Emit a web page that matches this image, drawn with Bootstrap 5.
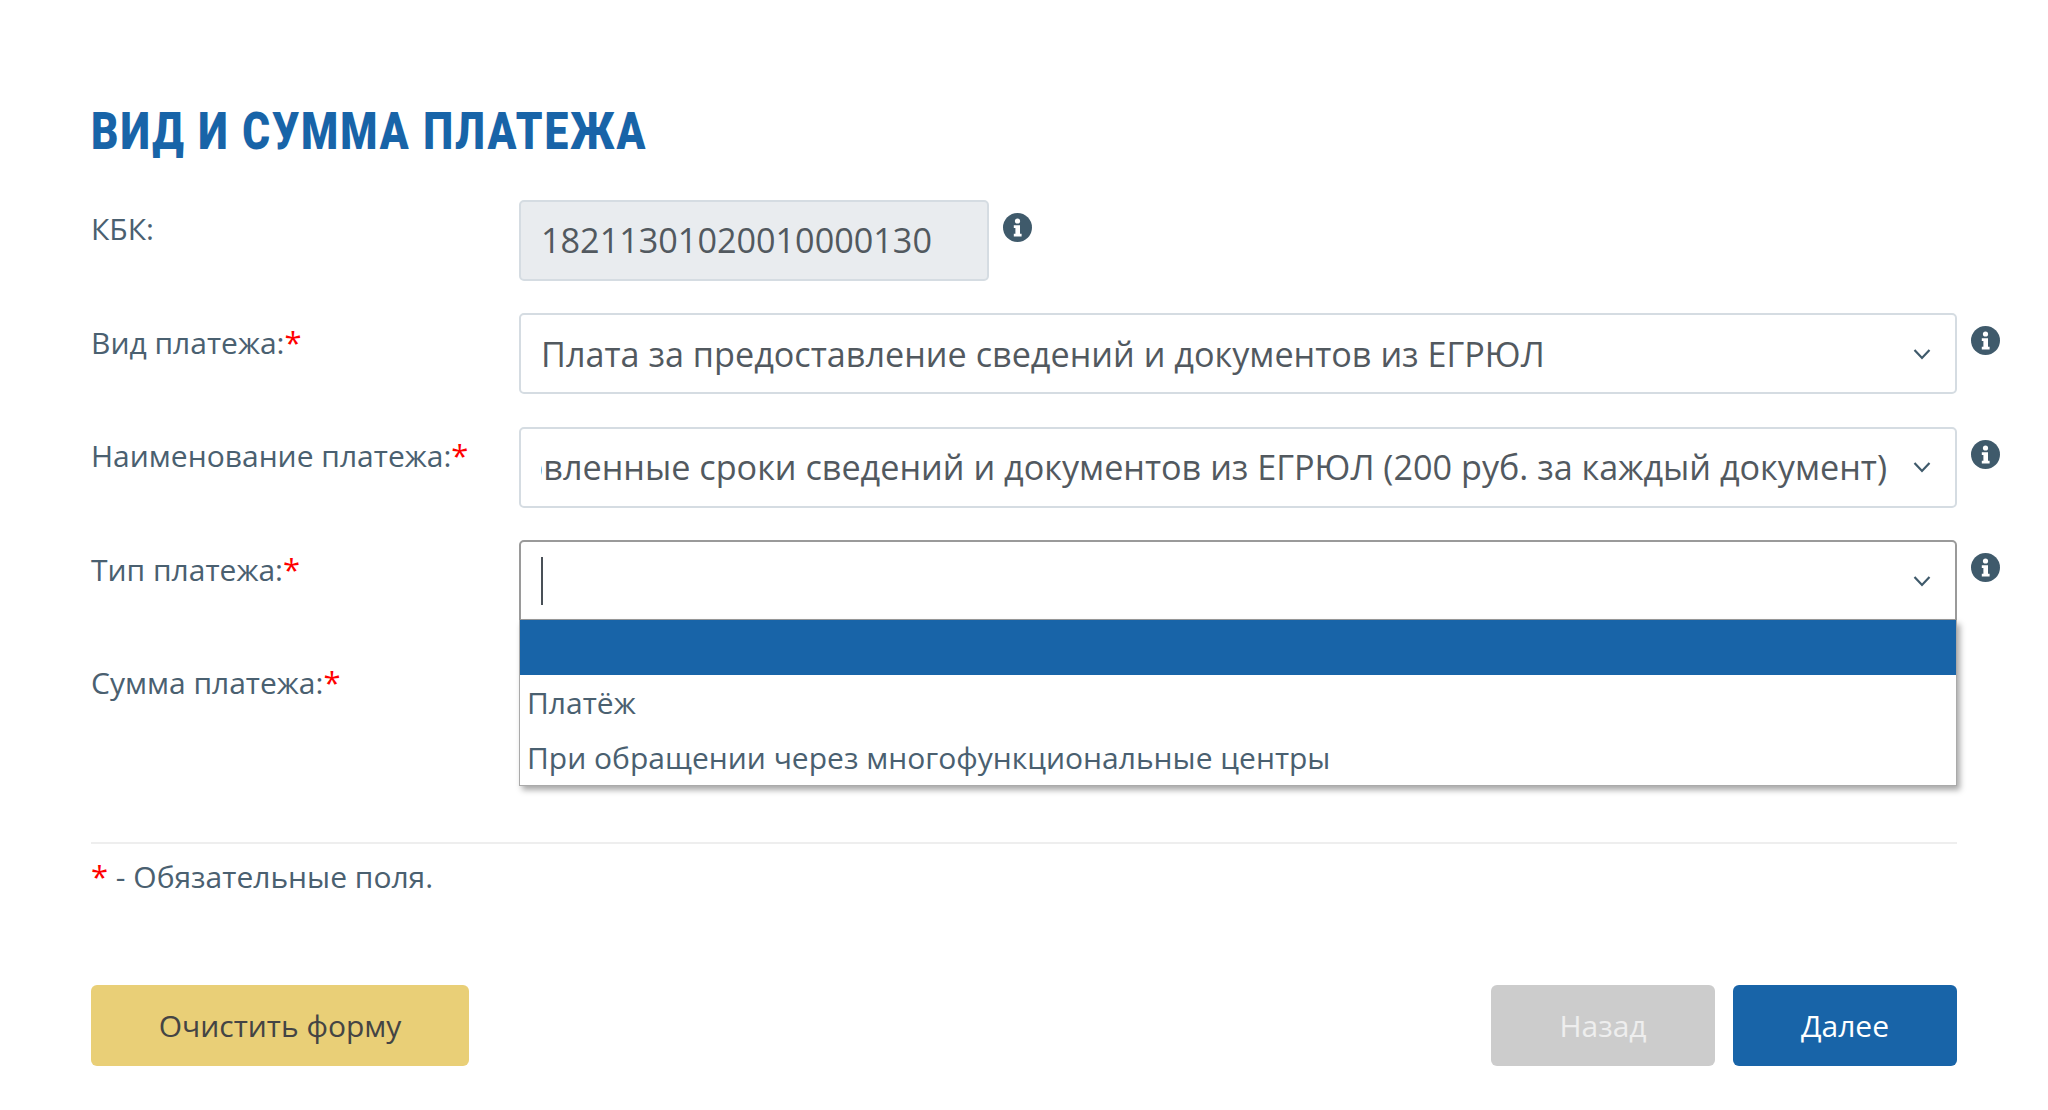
<!DOCTYPE html>
<html lang="ru">
<head>
<meta charset="utf-8">
<title>Вид и сумма платежа</title>
<link href="https://cdn.jsdelivr.net/npm/bootstrap@5.3.0/dist/css/bootstrap.min.css" rel="stylesheet">
<style>
body{background:#fff;font-family:"Open Sans",sans-serif;color:#4a6070;}
.pay-page{padding:104px 91px 0 91px;width:2048px;}
.pay-title{font-family:"Roboto",sans-serif;font-weight:900;font-size:52px;line-height:56px;letter-spacing:2.5px;color:#1864a8;margin:0 0 39.5px;transform:scaleX(.815);transform-origin:left center;white-space:nowrap;}
.pay-row{margin-bottom:32.5px;}
.pay-label{width:428px;flex:none;font-size:30px;line-height:40px;padding-top:9.5px;margin:0;color:#4a6070;}
.req{color:#f00;font-size:31px;font-weight:500;line-height:1;}
.pay-field{height:81px;border:2px solid #d5dce2;border-radius:5px;font-size:34.2px;color:#52595f;padding:0 20px;background:#fff;display:flex;align-items:center;}
.pay-field.ro{background:#e9ecef;width:470px;flex:none;}
.pay-wide{width:1438px;flex:none;position:relative;}
.pay-wide .pay-field{padding-right:68px;}
.pay-field.focused{border-color:#9a9a9a;border-bottom-left-radius:0;border-bottom-right-radius:0;}
.clip-val{white-space:nowrap;overflow:hidden;display:flex;justify-content:flex-end;flex:1;}
.caret-bar{width:2px;height:48px;background:#495057;}
.chev{position:absolute;right:26px;top:50%;margin-top:-6px;width:18px;height:12px;}
.info{width:29px;height:29px;flex:none;margin:13px 0 0 14px;}
.pay-menu{position:absolute;left:0;right:0;top:80px;background:#fff;border:1px solid #aaa;border-top:0;box-shadow:3px 4px 6px rgba(0,0,0,.35);font-size:30px;z-index:5;color:#4a6070;}
.opt{height:55px;line-height:55px;padding-left:7px;white-space:nowrap;}
.opt.sel{background:#1864a8;}
.pay-rule{margin:107px 0 0;border:0;border-top:2px solid #eee;opacity:1;width:1866px;}
.pay-note{font-size:30px;line-height:40px;margin:13px 0 0;color:#4a6070;}
.pay-actions{margin-top:88px;width:1866px;}
.pay-btn{width:224px;height:81px;border:0;border-radius:6px;font-size:30px;padding:0;display:flex;align-items:center;justify-content:center;}
.pay-btn.clear-b{width:378px;background:#e9cf77;color:#444;}
.pay-btn.back-b{background:#ccc;color:#eee;opacity:1;}
.pay-btn.next-b{background:#1864a8;color:#fff;}
.btn-pair{gap:18px;}
</style>
</head>
<body>
<svg width="0" height="0" class="d-block position-absolute">
<defs>
<symbol id="ic-info" viewBox="0 0 29 29"><circle cx="14.5" cy="14.5" r="14.5" fill="#3f5a6b"/><circle cx="14.5" cy="8" r="2.6" fill="#fff"/><path d="M10.8 12.2h6.2v8.6h1.6v2.7h-7.8v-2.7h1.6v-5.9h-1.6z" fill="#fff"/></symbol>
<symbol id="ic-chev" viewBox="0 0 18 12"><path d="M1.5 2 9 10l7.5-8" fill="none" stroke="#3f5a6b" stroke-width="2.2"/></symbol>
</defs>
</svg>
<main class="pay-page">
<h1 class="pay-title">ВИД И СУММА ПЛАТЕЖА</h1>
<form>
<div class="d-flex pay-row">
<label class="pay-label">КБК:</label>
<div class="pay-field ro">18211301020010000130</div>
<svg class="info"><use href="#ic-info"/></svg>
</div>
<div class="d-flex pay-row">
<label class="pay-label">Вид платежа:<span class="req">*</span></label>
<div class="pay-wide"><div class="pay-field">Плата за предоставление сведений и документов из ЕГРЮЛ</div><svg class="chev"><use href="#ic-chev"/></svg></div>
<svg class="info"><use href="#ic-info"/></svg>
</div>
<div class="d-flex pay-row">
<label class="pay-label">Наименование платежа:<span class="req">*</span></label>
<div class="pay-wide"><div class="pay-field"><div class="clip-val"><span>в установленные сроки сведений и документов из ЕГРЮЛ (200 руб. за каждый документ)</span></div></div><svg class="chev"><use href="#ic-chev"/></svg></div>
<svg class="info"><use href="#ic-info"/></svg>
</div>
<div class="d-flex pay-row">
<label class="pay-label">Тип платежа:<span class="req">*</span></label>
<div class="pay-wide"><div class="pay-field focused"><span class="caret-bar"></span></div><svg class="chev"><use href="#ic-chev"/></svg>
<div class="pay-menu">
<div class="opt sel">&nbsp;</div>
<div class="opt">Платёж</div>
<div class="opt">При обращении через многофункциональные центры</div>
</div>
</div>
<svg class="info"><use href="#ic-info"/></svg>
</div>
<div class="d-flex pay-row">
<label class="pay-label">Сумма платежа:<span class="req">*</span></label>
<div class="pay-wide"><div class="pay-field"></div></div>
</div>
</form>
<hr class="pay-rule">
<p class="pay-note"><span class="req">*</span> - Обязательные поля.</p>
<div class="d-flex justify-content-between pay-actions">
<button type="button" class="btn pay-btn clear-b">Очистить форму</button>
<div class="d-flex btn-pair">
<button type="button" class="btn pay-btn back-b" disabled>Назад</button>
<button type="button" class="btn pay-btn next-b">Далее</button>
</div>
</div>
</main>
</body>
</html>
